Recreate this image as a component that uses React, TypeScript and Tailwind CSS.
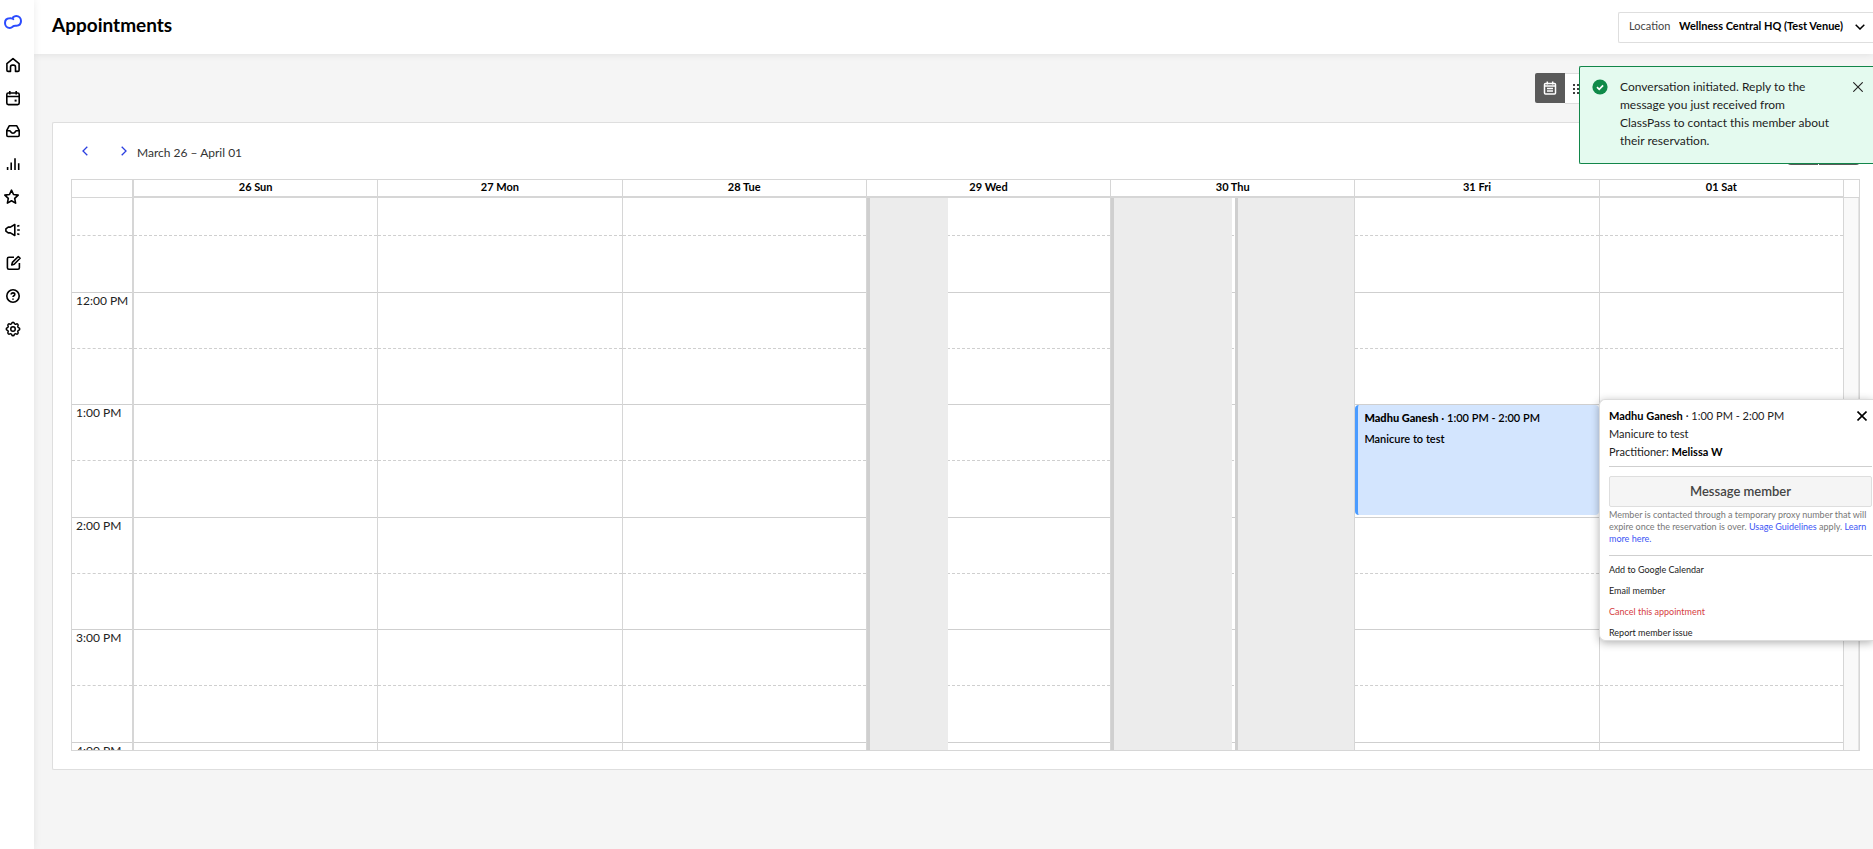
import type { ReactNode } from 'react'
import { TbSettings } from 'react-icons/tb'

const navItems: { label: string; icon: ReactNode }[] = [
  {
    label: 'Home',
    icon: (
      <path d="M1.900 6.600 8 1.600l6.100 5v6.600c0 .7-.5 1.200-1.200 1.200h-2.400V10c0-1.100-.9-1.900-1.900-1.900H7.400c-1.100 0-1.900.8-1.900 1.900v4.400H3.100c-.7 0-1.200-.5-1.200-1.200z" />
    ),
  },
  {
    label: 'Appointments',
    icon: (
      <>
        <rect x="1.8" y="3" width="12.400" height="11.600" rx="1.500" />
        <path d="M1.800 6.500h12.400M4.800 1v3.400M11.200 1v3.400" />
        <path d="M9.600 9.600h2v2h-2z" fill="currentColor" stroke="none" />
      </>
    ),
  },
  {
    label: 'Inbox',
    icon: (
      <>
        <path d="M4.200 2.800h7.600l2.400 4.600v4.900c0 .7-.5 1.200-1.200 1.200H3c-.7 0-1.200-.5-1.200-1.200V7.400z" />
        <path d="M1.800 7.800h3c.7 0 .9 2.400 3.200 2.400s2.500-2.400 3.200-2.400h3" />
      </>
    ),
  },
  {
    label: 'Reports',
    icon: <path d="M2.600 11v3M6.200 6.500v7.500M10 2.200v11.800M13.700 7.200v6.800" />,
  },
  {
    label: 'Reviews',
    icon: (
      <path d="M6.500 1.200 8.500 5.500l4.700.6-3.500 3.300.9 4.700-4.100-2.300-4.100 2.300.9-4.700L-.2 6.100l4.700-.6z" />
    ),
  },
  {
    label: 'Promotions',
    icon: (
      <>
        <path d="M9.800 2.500v11L5.400 10.900H3.200L.9 9.200V6.800l2.300-1.700h2.200z" />
        <path d="M12.200 4.200l2.200-.7M12.200 8h2.600M12.200 11.800l2.200.7" />
      </>
    ),
  },
  {
    label: 'Edit venue',
    icon: (
      <>
        <path d="M9 2.200H3.900c-.9 0-1.500.7-1.500 1.500v9c0 .8.6 1.500 1.500 1.500h9c.9 0 1.500-.7 1.500-1.500V8" />
        <path d="M13.300 1.500 15.100 3.300 9.200 9.200l-2.500.7.700-2.500z" />
      </>
    ),
  },
  {
    label: 'Help',
    icon: (
      <>
        <circle cx="8" cy="8" r="6.200" />
        <path d="M6.200 6.600c0-1 .8-1.700 1.800-1.700s1.800.7 1.800 1.600c0 1.200-1.800 1.300-1.800 2.500" />
        <path d="M8 10.600v1.100" />
      </>
    ),
  },
  {
    label: 'Settings',
    icon: <TbSettings x="-1" y="-1" size={18} />,
  },
]

const days: { label: string; blocks?: string[] }[] = [
  { label: '26 Sun' },
  { label: '27 Mon' },
  { label: '28 Tue' },
  { label: '29 Wed', blocks: ['w-1/3'] },
  { label: '30 Thu', blocks: ['flex-1', 'w-[49%]'] },
  { label: '31 Fri' },
  { label: '01 Sat' },
]

// One entry per half hour
const slots = ['', '', '12:00 PM', '', '1:00 PM', '', '2:00 PM', '', '3:00 PM', '', '4:00 PM', '']

function slotBorder(index: number) {
  return index % 2 === 0 ? 'border-t border-[#cfcfcf]' : 'border-t border-dashed border-[#cfcfcf]'
}

function Sidebar() {
  return (
    <aside className="relative z-10 w-[34px] shrink-0 bg-white shadow-[0_0_8px_rgba(0,0,0,0.08)]">
      <a href="#" aria-label="ClassPass" className="flex h-12 items-start pl-1 pt-[15px] text-[#2b4bff]">
        <svg viewBox="0 0 18 14" className="h-[14px] w-[18px]" fill="none" stroke="currentColor" strokeWidth="2" strokeLinecap="round">
          <path d="M9.300 4.200C8.700 2.900 7.200 3.100 5.600 3.200 2.800 3.300 1 5.200 1 8c0 2.800 2.100 4.900 4.800 4.900 1.900 0 2.700-1.200 3.500-1.700.9-.6 1.700-.4 3-.5C15.100 10.500 17 8.600 17 5.900 17 3.100 15 1 12.200 1c-1.500 0-2.500.7-3.100 1.300" />
        </svg>
      </a>
      <nav>
        {navItems.map((item) => (
          <a key={item.label} href="#" aria-label={item.label} className="flex h-[33px] items-center pl-[5px] text-black">
            <svg viewBox="0 0 16 16" className="size-4 overflow-visible" fill="none" stroke="currentColor" strokeWidth="1.600" strokeLinejoin="round">
              {item.icon}
            </svg>
          </a>
        ))}
      </nav>
    </aside>
  )
}

function Header() {
  return (
    <header className="flex h-[54px] items-center justify-between bg-white pl-[18px] shadow-[0_0_8px_rgba(0,0,0,0.1)]">
      <h1 className="pb-1 text-[19px] font-bold text-black">Appointments</h1>
      <div className="relative flex h-[31px] w-[255px] items-center rounded-l-xs border border-r-0 border-[#dedede] pb-px pl-[10px]">
        <label htmlFor="location" className="w-[50px] text-[11px] text-[#444]">
          Location
        </label>
        <select id="location" className="flex-1 appearance-none text-[11px] font-bold text-black">
          <option>Wellness Central HQ (Test Venue)</option>
        </select>
        <svg viewBox="0 0 10 6" className="pointer-events-none absolute right-2 h-[6px] w-[10px]" fill="none" stroke="black" strokeWidth="1.500">
          <path d="M.7.700 5 5 9.300.700" />
        </svg>
      </div>
    </header>
  )
}

function ViewToggle() {
  return (
    <div className="flex h-[68px] justify-end pr-[278px] pt-[19px]">
      <button aria-label="Calendar view" className="flex h-[30px] w-[30px] items-center justify-center rounded-l-xs bg-[#5a5a5a] text-white">
        <svg viewBox="0 0 14 14" className="size-[14px]" fill="none" stroke="currentColor" strokeWidth="1.500">
          <rect x="1.500" y="2.500" width="11" height="10.500" rx="1" />
          <path d="M1.500 5h11M4.300.5v3M9.700.5v3M4 7.500h6M4 10h6" />
        </svg>
      </button>
      <button aria-label="List view" className="flex h-[31px] w-[30px] items-center justify-center border border-l-0 border-[#dedede] bg-white text-black">
        <svg viewBox="0 0 14 12" className="h-3 w-[14px]" stroke="currentColor" strokeWidth="1.500">
          <path d="M0 2h2M0 6h2M0 10h2M4 2h10M4 6h10M4 10h10" />
        </svg>
      </button>
    </div>
  )
}

function Toast() {
  return (
    <div role="status" className="absolute right-0 top-[66px] z-30 flex w-[294px] gap-3 rounded-l-xs border border-r-0 border-[#12864a] bg-[#e4faef] pb-[13px] pl-3 pt-[11px]">
      <svg viewBox="0 0 16 16" className="mt-px size-4 shrink-0">
        <circle cx="8" cy="8" r="7.600" fill="#0f8a49" />
        <path d="m5 8.200 2.200 2.100 3.900-4" fill="none" stroke="white" strokeWidth="1.700" />
      </svg>
      <p className="w-[214px] text-xs leading-[18px] text-[#1d1d1d]">
        Conversation initiated. Reply to the message you just received from ClassPass to contact this member about their reservation.
      </p>
      <button aria-label="Dismiss" className="absolute right-[10px] top-[15px]">
        <svg viewBox="0 0 10 10" className="size-[10px]" stroke="#222" strokeWidth="1.100">
          <path d="M.3.300l9.400 9.400M9.700.300.300 9.700" />
        </svg>
      </button>
    </div>
  )
}

function AppointmentDetails() {
  return (
    <section className="absolute right-0 top-[399px] z-20 h-[242px] w-[274px] overflow-hidden rounded-l-md border border-r-0 border-[#dcdcdc] bg-white pl-[9px] pr-px shadow-[0_2px_8px_rgba(0,0,0,0.3)]">
      <div className="pt-[7px] text-[11px] leading-[18px] text-[#222]">
        <p>
          <strong className="text-black">Madhu Ganesh</strong> · 1:00 PM - 2:00 PM
        </p>
        <p>Manicure to test</p>
        <p>
          Practitioner: <strong className="text-black">Melissa W</strong>
        </p>
      </div>
      <button aria-label="Close" className="absolute right-[6px] top-[11px]">
        <svg viewBox="0 0 10 10" className="size-[10px]" stroke="black" strokeWidth="1.600">
          <path d="M.5.500l9 9M9.500.500l-9 9" />
        </svg>
      </button>
      <hr className="mt-[5px] border-[#cfcfcf]" />
      <button className="mt-[9px] h-[31px] w-full rounded-xs border border-[#dedede] bg-[#f5f5f5] text-[13px] font-semibold text-[#444]">
        Message member
      </button>
      <p className="mt-[2px] text-[9px] leading-3 text-[#777]">
        Member is contacted through a temporary proxy number that will expire once the reservation is over.{' '}
        <a href="#" className="text-[#3d55f5]">Usage Guidelines</a> apply.{' '}
        <a href="#" className="text-[#3d55f5]">Learn more here.</a>
      </p>
      <hr className="mb-[3px] mt-[10px] border-[#cfcfcf]" />
      <ul className="text-[9px] leading-[21px] text-[#222]">
        <li><a href="#">Add to Google Calendar</a></li>
        <li><a href="#">Email member</a></li>
        <li><a href="#" className="text-[#d6403f]">Cancel this appointment</a></li>
        <li><a href="#">Report member issue</a></li>
      </ul>
    </section>
  )
}

function WeekToolbar() {
  return (
    <div className="flex h-14 items-start justify-between">
      <div className="flex items-center pt-5">
        <button aria-label="Previous week" className="flex w-7 justify-center pb-1 text-[#2b3fe0]">
          <svg viewBox="0 0 6 10" className="h-[10px] w-[6px]" fill="none" stroke="currentColor" strokeWidth="1.300">
            <path d="M5.300.800 1 5l4.300 4.200" />
          </svg>
        </button>
        <button aria-label="Next week" className="ml-3 flex w-[26px] justify-center pb-1 text-[#2b3fe0]">
          <svg viewBox="0 0 6 10" className="h-[10px] w-[6px]" fill="none" stroke="currentColor" strokeWidth="1.300">
            <path d="M.7.800 5 5 .7 9.200" />
          </svg>
        </button>
        <span className="text-xs leading-5 text-[#333]">March 26 – April 01</span>
      </div>
      <div className="flex gap-px pt-[14px]">
        <button aria-label="Day" className="h-7 w-[31px] rounded-l-sm bg-[#5a5a5a]" />
        <button aria-label="Week" className="h-7 w-[41px] rounded-r-sm bg-[#5a5a5a]" />
      </div>
    </div>
  )
}

function WeekCalendar() {
  return (
    <div className="border border-[#d6d6d6]">
      <div className="flex h-[18px] text-[11px] font-bold leading-[14px] text-black">
        <div className="w-[60px] border-b border-[#d6d6d6]" />
        <div className="w-[2px] bg-[#d6d6d6]" />
        {days.map((day) => (
          <div key={day.label} className="flex-1 border-b-2 border-r border-[#d6d6d6] text-center">
            {day.label}
          </div>
        ))}
        <div className="w-[15px] border-b border-[#d6d6d6]" />
      </div>

      <div className="h-[552px] overflow-hidden">
        <div className="-mt-[19px] flex h-[675px]">
          {/* Hours */}
          <div className="grid w-[60px] grid-rows-12">
            {slots.map((label, i) => (
              <div key={i} className={`whitespace-nowrap pl-1 text-xs leading-4 text-[#222] ${slotBorder(i)}`}>
                {label}
              </div>
            ))}
          </div>
          <div className="w-[2px] bg-[#d6d6d6]" />

          {/* Days */}
          {days.map((day) => (
            <div key={day.label} className="grid flex-1 grid-cols-1 grid-rows-12 border-r border-[#d6d6d6]">
              {slots.map((_, i) => (
                <div key={i} className={`col-start-1 ${slotBorder(i)}`} style={{ gridRow: i + 1 }} />
              ))}
              {day.blocks && (
                <div className="col-start-1 row-span-full flex gap-[3px]">
                  {day.blocks.map((width, i) => (
                    <div key={i} className={`border-l-3 border-l-[#cfcfcf] bg-[#ececec] ${width}`} />
                  ))}
                </div>
              )}
              {day.label === '31 Fri' && (
                <button className="col-start-1 row-span-2 row-start-5 mb-[2px] mt-px flex flex-col items-start rounded-sm border-l-3 border-[#4a9bff] bg-[#d3e5fe] pl-[6px] pt-1 text-left text-[11px] font-semibold leading-[18px] text-black">
                  <span>
                    <strong>Madhu Ganesh</strong> · 1:00 PM - 2:00 PM
                  </span>
                  <span className="mt-[3px]">Manicure to test</span>
                </button>
              )}
            </div>
          ))}
          <div className="w-[15px] border-r border-[#e4e4e4] bg-[#f9f9f9]" />
        </div>
      </div>
    </div>
  )
}

export default function App() {
  return (
    <div className="relative flex min-h-screen overflow-hidden bg-[#f5f5f5] font-['Lato','Liberation_Sans',sans-serif]">
      <Sidebar />
      <div className="min-w-0 flex-1">
        <Header />
        <main className="pl-[18px]">
          <ViewToggle />
          <div className="rounded-l-xs border border-r-0 border-[#dedede] bg-white pb-[18px] pl-[18px] pr-[13px]">
            <WeekToolbar />
            <WeekCalendar />
          </div>
        </main>
      </div>
      <Toast />
      <AppointmentDetails />
    </div>
  )
}
